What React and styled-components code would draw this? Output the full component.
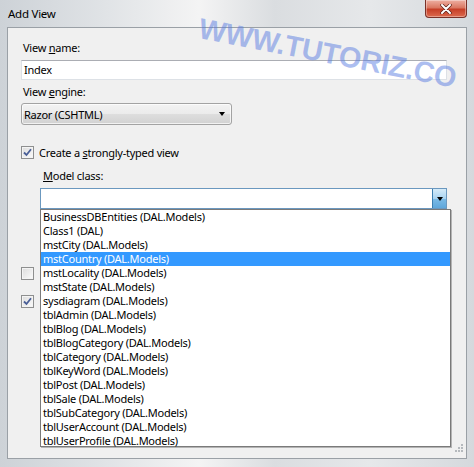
import React from 'react';
import styled, { createGlobalStyle } from 'styled-components';

const uiFont = '"Noto Sans", "Open Sans", sans-serif';

const GlobalStyle = createGlobalStyle`
  html, body {
    margin: 0;
    padding: 0;
    background: #e2e5e8;
  }
  body {
    font-family: ${uiFont};
    font-size: 11px;
    letter-spacing: -0.25px;
    color: #000;
  }
`;

const Window = styled.div`
  position: relative;
  width: 474px;
  height: 467px;
  overflow: hidden;
  display: flex;
  flex-direction: column;
  background: linear-gradient(90deg, #cdd2d7 0%, #e0e3e6 22%, #f4f4f4 42%, #dadde0 58%, #e6e8ea 78%, #d5d9dd 100%);
`;

const TitleBar = styled.div`
  height: 27px;
  flex: none;
  display: flex;
  align-items: flex-start;
  justify-content: space-between;
  padding: 0 7px 0 8px;
`;

const Title = styled.div`
  margin-top: 6px;
  font-size: 11.5px;
  line-height: 16px;
`;

const CloseButton = styled.div`
  width: 42px;
  height: 18px;
  box-sizing: border-box;
  border: 1px solid #7a3128;
  border-top: none;
  border-radius: 0 0 4px 4px;
  background: linear-gradient(#eeb0a2, #da7862 45%, #c63f27 55%, #dc6a4e);
  box-shadow: inset 0 0 0 1px rgba(255, 255, 255, 0.35);
  display: flex;
  align-items: center;
  justify-content: center;
`;

const Client = styled.div`
  position: relative;
  flex: 1;
  margin: 0 7px 8px 7px;
  border: 1px solid #9aa0a6;
  background: #f0f0f0;
  padding: 12px 19px 0 13px;
  display: flex;
  flex-direction: column;
  align-items: flex-start;
`;

const Label = styled.div`
  line-height: 16px;
  padding-left: ${p => p.$indent || 2}px;
  margin-top: ${p => p.$top || 0}px;
`;

const Key = styled.span`
  text-decoration: underline;
`;

const TextBox = styled.div`
  box-sizing: border-box;
  align-self: stretch;
  height: 20px;
  margin-top: 4px;
  padding-left: 2px;
  line-height: 18px;
  background: #fff;
  border: 1px solid #dde1e6;
  border-top-color: #abadb3;
`;

const SelectBox = styled.div`
  box-sizing: border-box;
  width: 211px;
  height: 22px;
  margin-top: 3px;
  padding: 0 6px 0 2px;
  display: flex;
  align-items: center;
  justify-content: space-between;
  border: 1px solid #a3a3a3;
  border-radius: 3px;
  background: linear-gradient(#f3f3f3, #ebebeb 50%, #dedede 50%, #d2d2d2);
  box-shadow: inset 0 0 0 1px rgba(255, 255, 255, 0.7);
`;

const Arrow = styled.span`
  width: 0;
  height: 0;
  border-left: 3.5px solid transparent;
  border-right: 3.5px solid transparent;
  border-top: 4px solid #000;
`;

const CheckRow = styled.div`
  display: flex;
  align-items: center;
  gap: 5px;
  height: 16px;
  margin-top: ${p => p.$top || 0}px;
`;

const Box = styled.div`
  box-sizing: border-box;
  width: 13px;
  height: 13px;
  border: 1px solid #8e8f8f;
  background: linear-gradient(135deg, #dcdcdc, #fbfbfb);
  box-shadow: inset 0 0 0 1px #f4f4f4;
  display: flex;
  align-items: center;
  justify-content: center;
`;

const Group = styled.div`
  align-self: stretch;
  padding-left: 19px;
  display: flex;
  flex-direction: column;
  align-items: flex-start;
`;

const ComboWrap = styled.div`
  position: relative;
  align-self: stretch;
  margin-top: 4px;
`;

const Combo = styled.div`
  box-sizing: border-box;
  height: 21px;
  display: flex;
  background: #fff;
  border: 1px solid #6b98bf;
`;

const ComboButton = styled.div`
  margin-left: auto;
  width: 14px;
  box-sizing: border-box;
  border-left: 1px solid #3c7fb1;
  background: linear-gradient(#d5ebf9, #a9d4f1 50%, #7cbbe6 50%, #5fa7db);
  display: flex;
  align-items: center;
  justify-content: center;
`;

const List = styled.div`
  position: absolute;
  top: 100%;
  left: 0;
  width: 411px;
  height: 238px;
  box-sizing: border-box;
  background: #fff;
  border: 1px solid #7a7a7a;
  box-shadow: 1px 1px 0 rgba(0, 0, 0, 0.25);
  z-index: 2;
`;

const Item = styled.div`
  height: 14px;
  line-height: 14px;
  padding-left: 2px;
  white-space: nowrap;
  color: ${p => (p.$active ? '#fff' : '#000')};
  background: ${p => (p.$active ? '#3399ff' : 'transparent')};
`;

const Grip = styled.div`
  position: absolute;
  right: 3px;
  bottom: 3px;
`;

const Watermark = styled.div`
  position: absolute;
  left: 199px;
  top: 12px;
  font-family: "Liberation Sans", Arial, sans-serif;
  font-size: 29px;
  font-weight: bold;
  color: rgba(90, 125, 225, 0.5);
  white-space: nowrap;
  transform: rotate(11deg);
  transform-origin: left center;
  pointer-events: none;
  z-index: 5;
`;

const models = [
  'BusinessDBEntities (DAL.Models)',
  'Class1 (DAL)',
  'mstCity (DAL.Models)',
  'mstCountry (DAL.Models)',
  'mstLocality (DAL.Models)',
  'mstState (DAL.Models)',
  'sysdiagram (DAL.Models)',
  'tblAdmin (DAL.Models)',
  'tblBlog (DAL.Models)',
  'tblBlogCategory (DAL.Models)',
  'tblCategory (DAL.Models)',
  'tblKeyWord (DAL.Models)',
  'tblPost (DAL.Models)',
  'tblSale (DAL.Models)',
  'tblSubCategory (DAL.Models)',
  'tblUserAccount (DAL.Models)',
  'tblUserProfile (DAL.Models)',
];

function Check({ checked }) {
  return (
    <Box>
      {checked && (
        <svg width="9" height="9" viewBox="0 0 9 9">
          <path d="M1 4.5 L3.5 7 L8 1.2" fill="none" stroke="#4a5f97" strokeWidth="1.8" />
        </svg>
      )}
    </Box>
  );
}

export default function App() {
  return (
    <>
      <GlobalStyle />
      <Window>
        <TitleBar>
          <Title>Add View</Title>
          <CloseButton>
            <svg width="12" height="10" viewBox="0 0 12 10">
              <path d="M2 1 L10 9 M10 1 L2 9" stroke="#5a2018" strokeWidth="3.4" strokeLinecap="round" />
              <path d="M2 1 L10 9 M10 1 L2 9" stroke="#fff" strokeWidth="2" strokeLinecap="round" />
            </svg>
          </CloseButton>
        </TitleBar>
        <Client>
          <Label>View <Key>n</Key>ame:</Label>
          <TextBox>Index</TextBox>
          <Label $top={4}>View <Key>e</Key>ngine:</Label>
          <SelectBox>
            <span>Razor (CSHTML)</span>
            <Arrow />
          </SelectBox>
          <CheckRow $top={19}>
            <Check checked />
            <span>Create a <Key>s</Key>trongly-typed view</span>
          </CheckRow>
          <Group>
            <Label $top={8} $indent={3}><Key>M</Key>odel class:</Label>
            <ComboWrap>
              <Combo>
                <ComboButton><Arrow /></ComboButton>
              </Combo>
              <List>
                {models.map((m, i) => (
                  <Item key={m} $active={i === 3}>{m}</Item>
                ))}
              </List>
            </ComboWrap>
          </Group>
          {/* options below sit under the open drop-down list */}
          <CheckRow $top={56} aria-label="Create as a partial view">
            <Check />
          </CheckRow>
          <CheckRow $top={12} aria-label="Use a layout or master page">
            <Check checked />
          </CheckRow>
          <Grip>
            <svg width="8" height="8" viewBox="0 0 8 8" fill="#b5b9bd">
              <rect x="6" y="0" width="2" height="2" />
              <rect x="3" y="3" width="2" height="2" />
              <rect x="6" y="3" width="2" height="2" />
              <rect x="0" y="6" width="2" height="2" />
              <rect x="3" y="6" width="2" height="2" />
              <rect x="6" y="6" width="2" height="2" />
            </svg>
          </Grip>
        </Client>
        <Watermark>WWW.TUTORIZ.CO</Watermark>
      </Window>
    </>
  );
}
